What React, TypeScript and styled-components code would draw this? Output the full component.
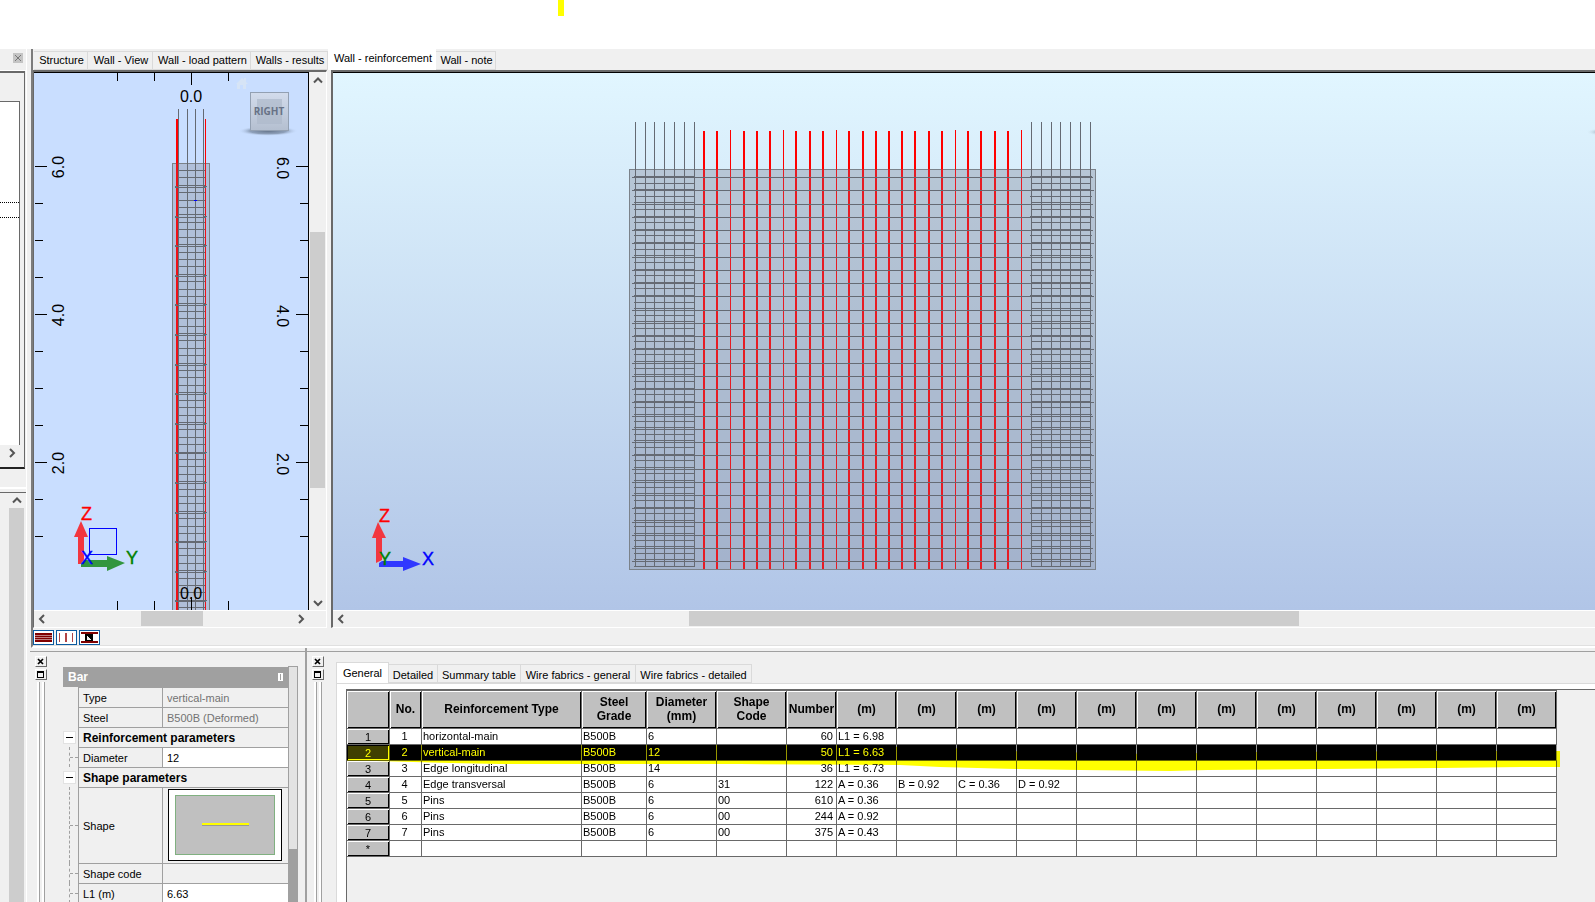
import React from "react";
import styled, { createGlobalStyle, css } from "styled-components";

const FACE = "#f0f0f0";
const SHADE = "#a0a0a0";
const DARK = "#696969";
const THUMB = "#cdcdcd";
const STEEL = "#656a73";

const Global = createGlobalStyle`
  * { box-sizing: border-box; }
  body { margin: 0; background: #fff; color: #000; font: 11px/14px "Liberation Sans", Arial, sans-serif; }
  button, input { font: inherit; color: inherit; margin: 0; padding: 0; border: 0; border-radius: 0; background: transparent; }
  svg { display: block; }
`;

/* ---------- shell ---------- */

const Page = styled.div`
  display: flex;
  flex-direction: column;
  height: 100vh;
  overflow: hidden;
`;

const TopBand = styled.header`
  flex: none;
  height: 49px;
  padding-left: 558px;
`;

const Marker = styled.div`
  width: 6px;
  height: 16px;
  background: #ff0;
`;

const Body = styled.div`
  display: flex;
  flex: 1;
  min-height: 0;
  background: ${FACE};
`;

const Main = styled.main`
  display: flex;
  flex-direction: column;
  flex: 1;
  min-width: 0;
  margin-left: 3px;
`;

/* ---------- left dock ---------- */

const Dock = styled.aside`
  display: flex;
  flex-direction: column;
  flex: none;
  width: 27px;
  border-right: 1px solid #fff;
`;

const DockHeader = styled.div`
  display: flex;
  justify-content: flex-end;
  align-items: flex-start;
  height: 22px;
  padding: 4px 3px 0 0;
  border-bottom: 1px solid #fff;
`;

const DockClose = styled.button`
  width: 10px;
  height: 10px;
  background: #c4c4c4;
`;

const DockFrame = styled.div`
  display: flex;
  flex-direction: column;
  width: 25px;
  height: 398px;
  padding: 28px 4px 6px 0;
  border: solid ${DARK};
  border-width: 2px 1px 2px 0;
  border-bottom-color: #222;
`;

const DockList = styled.div`
  flex: 1;
  padding-top: 100px;
  background: #fff;
  border: solid ${DARK};
  border-width: 1px 1px 0 0;
`;

const DockItem = styled.div`
  height: 16px;
  border: dotted #000;
  border-width: 1px 0;
`;

const DockScroll = styled.button`
  display: flex;
  align-items: center;
  justify-content: flex-end;
  height: 16px;
  padding-right: 3px;
`;

const DockLower = styled.div`
  display: flex;
  flex-direction: column;
  flex: 1;
  margin-top: 18px;
  padding-top: 3px;
  border-top: 2px solid #fff;
`;

const DockLowerBody = styled.div`
  display: flex;
  flex-direction: column;
  flex: 1;
  padding-left: 9px;
  border-top: 1px solid ${DARK};
`;

const DockArrow = styled.button`
  display: flex;
  align-items: center;
  justify-content: center;
  width: 15px;
  height: 15px;
`;

const DockThumb = styled.div`
  flex: 1;
  width: 15px;
  background: ${THUMB};
`;

/* ---------- tabs ---------- */

const TabStrip = styled.nav<{ $inset: number }>`
  display: flex;
  align-items: flex-end;
  padding-left: ${(p) => p.$inset}px;
`;

const Tab = styled.button<{ $w: number; $active?: boolean; $plain?: boolean }>`
  flex: none;
  width: ${(p) => p.$w}px;
  height: 19px;
  padding: ${(p) => (p.$plain ? "0 0 2px 2px" : "2px 0 0 0")};
  white-space: nowrap;
  border: solid #dadada;
  border-width: 1px 1px 1px 0;
  ${(p) =>
    p.$active &&
    css`
      height: 21px;
      padding-bottom: ${p.$plain ? "4px" : "1px"};
      padding-top: 0;
      background: #fff;
      border-width: ${p.$plain ? "0" : "1px 1px 0 1px"};
    `}
`;

/* ---------- views ---------- */

const Upper = styled.section`
  flex: none;
  margin-left: 1px;
  border-left: 2px solid #7c7c7c;
  border-bottom: 2px solid #fff;
`;

const Panes = styled.div`
  display: flex;
`;

const Pane = styled.div<{ $fill?: boolean }>`
  display: flex;
  flex-direction: column;
  min-width: 0;
  border-top: 2px solid ${DARK};
  border-left: ${(p) => (p.$fill ? 2 : 1)}px solid ${DARK};
  border-bottom: 1px solid #fff;
  ${(p) => (p.$fill ? "flex: 1;" : "flex: none; margin-right: 4px; border-right: 1px solid #fff;")}
`;

const PaneRow = styled.div`
  display: flex;
`;

const SideCanvas = styled.div`
  width: 275px;
  background: #c9deff;
  border-top: 1px solid #000;
  border-right: 1px solid #000;
`;

const FrontCanvas = styled.div`
  flex: 1;
  min-width: 0;
  overflow: hidden;
  background: linear-gradient(#e1f6ff, #b1c5e7);
  border-top: 1px solid #000;
`;

const VScroll = styled.div`
  display: flex;
  flex-direction: column;
  width: 17px;
  padding: 1px 1px 0;
`;

const HScroll = styled.div<{ $corner?: boolean }>`
  display: flex;
  height: 17px;
  padding: 0 ${(p) => (p.$corner ? 17 : 0)}px 0 1px;
  border-top: 1px solid #fff;
`;

const ScrollButton = styled.button`
  display: flex;
  align-items: center;
  justify-content: center;
  flex: none;
  width: 16px;
  height: 15px;
`;

const Track = styled.div<{ $vertical?: boolean; $before: number }>`
  flex: 1;
  min-width: 0;
  ${(p) => (p.$vertical ? `padding-top: ${p.$before}px;` : `padding-left: ${p.$before}px;`)}
`;

const Thumb = styled.div<{ $w: number; $h: number }>`
  width: ${(p) => p.$w}px;
  height: ${(p) => p.$h}px;
  background: ${THUMB};
`;

const ViewTools = styled.div`
  display: flex;
  gap: 2px;
  height: 18px;
  padding-top: 2px;
  border-bottom: 1px solid #e0e0e0;
`;

const ToolButton = styled.button`
  width: 21px;
  height: 15px;
  background: #fff;
  border: 1px solid #0b5a9f;
`;

/* ---------- lower panels ---------- */

const Lower = styled.section`
  display: flex;
  flex: 1;
  min-height: 0;
`;

const Properties = styled.section`
  display: flex;
  flex: none;
  width: 275px;
  margin-top: 3px;
  padding-left: 5px;
  border-top: 1px solid ${SHADE};
`;

const Divider = styled.div`
  flex: none;
  width: 2px;
  background: ${SHADE};
`;

const Reports = styled.section`
  display: flex;
  flex: 1;
  min-width: 0;
  margin-top: 3px;
  padding-left: 5px;
  border-top: 1px solid ${SHADE};
`;

const Grip = styled.div`
  display: flex;
  flex-direction: column;
  align-items: center;
  flex: none;
  gap: 2px;
  width: 12px;
  padding-top: 4px;
`;

const GripButton = styled.button`
  flex: none;
  width: 12px;
  height: 11px;
  border: 1px solid;
  border-color: #fff ${DARK} ${DARK} #fff;
`;

const GripBars = styled.div`
  display: flex;
  gap: 2px;
  flex: 1;
`;

const GripBar = styled.div`
  width: 3px;
  border-right: 1px solid ${SHADE};
  background: #fff;
`;

const PropertyList = styled.div`
  width: 225px;
  margin-left: 16px;
  padding-top: 15px;
`;

const PropertyTitle = styled.div`
  display: flex;
  align-items: center;
  justify-content: space-between;
  height: 20px;
  padding: 0 5px;
  background: ${SHADE};
  color: #fff;
  font-size: 12px;
  font-weight: bold;
`;

const TitleGlyph = styled.span`
  width: 5px;
  height: 8px;
  border: solid #fff;
  border-width: 1px 2px;
`;

const PropertyRow = styled.div<{ $tall?: boolean }>`
  display: flex;
  height: ${(p) => (p.$tall ? 76 : 20)}px;
`;

const TreeCell = styled.div`
  display: flex;
  align-items: center;
  flex: none;
  width: 15px;
`;

const Stem = styled.div`
  display: flex;
  align-items: center;
  width: 9px;
  height: 100%;
  margin-left: 6px;
  border-left: 1px dashed ${SHADE};
`;

const Twig = styled.div`
  width: 8px;
  border-top: 1px dashed ${SHADE};
`;

const Expander = styled.button`
  display: flex;
  align-items: center;
  justify-content: center;
  width: 13px;
  height: 13px;
  background: #fff;
  border: 1px solid #e2e2e2;
`;

const ExpanderBar = styled.span`
  width: 7px;
  height: 1px;
  background: #000;
`;

const PropertyLabel = styled.label`
  display: flex;
  align-items: center;
  width: 85px;
  padding-left: 4px;
  border: solid ${SHADE};
  border-width: 1px 1px 0 1px;
`;

const PropertyHeading = styled.div`
  flex: 1;
  padding: 3px 4px 0;
  border: solid ${SHADE};
  border-width: 1px 0 0 1px;
  font-size: 12px;
  font-weight: bold;
`;

const PropertyValue = styled.div`
  display: flex;
  align-items: flex-start;
  flex: 1;
  padding: 1px 0 0 5px;
  border-top: 1px solid ${SHADE};
`;

const PropertyInput = styled.input`
  flex: 1;
  min-width: 0;
  padding-left: 4px;
  background: #fff;
  border-top: 1px solid ${SHADE};
  &:disabled { background: ${FACE}; color: #737373; }
`;

const ShapePreview = styled.div`
  width: 114px;
  height: 72px;
  padding: 5px 6px;
  background: #fff;
  border: 1px solid #000;
`;

const PropertyScroll = styled.div`
  width: 10px;
  margin-top: 14px;
  padding-top: 182px;
  border: 1px solid ${SHADE};
  background: #e3e3e3;
`;

const PropertyThumb = styled.div`
  height: 100%;
  background: ${SHADE};
`;

const ReportBook = styled.div`
  display: flex;
  flex-direction: column;
  flex: 1;
  min-width: 0;
  margin-left: 12px;
  padding-top: 10px;
`;

const Sheet = styled.div`
  flex: 1;
  min-height: 0;
  padding: 5px 0 0 9px;
  background: #fff;
  border: solid #dadada;
  border-width: 1px 0 0 1px;
`;

const SheetFrame = styled.div`
  position: relative;
  isolation: isolate;
  height: 100%;
  background: ${FACE};
  border: solid ${DARK};
  border-width: 1px 0 0 1px;
`;

const Table = styled.table`
  width: 1210px;
  table-layout: fixed;
  border-collapse: separate;
  border-spacing: 0;
  background: #fff;
`;

const HeadCell = styled.th`
  height: 39px;
  padding: 0 0 2px;
  background: #c0c0c0;
  border: solid ${DARK};
  border-width: 1px 1px 1px 0;
  box-shadow: inset 1px 1px #fff, inset -1px -1px #000;
  font-size: 12px;
  white-space: pre-line;
`;

const RowHead = styled.th<{ $selected: boolean }>`
  height: 16px;
  padding: 0;
  font-weight: normal;
  background: ${(p) => (p.$selected ? "#3f3f3f" : "#c0c0c0")};
  color: ${(p) => (p.$selected ? "#fff" : "#000")};
  border: solid ${DARK};
  border-width: 0 1px 1px 0;
  box-shadow: ${(p) =>
    p.$selected ? "inset 1px 1px #000, inset -1px -1px #fff" : "inset 1px 1px #fff, inset -1px -1px #000"};
`;

const Cell = styled.td<{ $selected: boolean; $align?: string }>`
  height: 16px;
  padding: 0 3px 1px 1px;
  text-align: ${(p) => p.$align ?? "left"};
  white-space: nowrap;
  background: ${(p) => (p.$selected ? "#000" : "#fff")};
  color: ${(p) => (p.$selected ? "#fff" : "#000")};
  border: solid ${DARK};
  border-width: 0 1px 1px 0;
  ${(p) => p.$selected && "border-right-color: #969696;"}
`;

const Highlight = styled.svg`
  position: absolute;
  top: 54px;
  left: 0;
  mix-blend-mode: multiply;
  pointer-events: none;
`;

/* ---------- drawings ---------- */

const chevrons = {
  left: "M6 1 L2 5 L6 9",
  right: "M3 1 L7 5 L3 9",
  up: "M1 6.500 L5 2.500 L9 6.500",
  down: "M1 3 L5 7 L9 3",
};

function Chevron({ dir }: { dir: keyof typeof chevrons }) {
  return (
    <svg width="10" height="10" viewBox="0 0 10 10" aria-hidden="true">
      <path d={chevrons[dir]} fill="none" stroke="#555" strokeWidth="2" />
    </svg>
  );
}

const range = (n: number) => Array.from({ length: n }, (_, i) => i);

const TEXT = '"Liberation Sans", Arial, sans-serif';

function SideView() {
  const minor = [130, 167, 204, 278, 315, 352, 426, 463];
  const major: [number, string][] = [[93, "6.0"], [241, "4.0"], [389, "2.0"]];
  return (
    <svg width="274" height="537" viewBox="34 73 274 537" role="img" aria-label="Side view of the wall">
      <defs>
        <linearGradient id="cube" x1="0" y1="0" x2="0" y2="1">
          <stop offset="0" stopColor="#d3dcec" />
          <stop offset="1" stopColor="#b4bfd0" />
        </linearGradient>
        <radialGradient id="shade">
          <stop offset="0" stopColor="#65758b" />
          <stop offset="0.6" stopColor="#7f90a8" stopOpacity="0.8" />
          <stop offset="1" stopColor="#c9deff" stopOpacity="0" />
        </radialGradient>
      </defs>
      <g shapeRendering="crispEdges">
        <rect x="172.500" y="163.500" width="37" height="460" fill="#b0bfd9" stroke="#7b8188" />
        {[178, 187, 195, 203].map((x) => (
          <rect key={x} x={x} y="109" width="1" height="501" fill={STEEL} />
        ))}
        {range(60).map((i) => (
          <rect key={i} x="178" y={Math.round(170 + i * 7.41)} width="27" height="1" fill={STEEL} />
        ))}
        <rect x="176" y="119" width="2" height="44" fill="#f00" />
        <rect x="205" y="119" width="1" height="44" fill="#f00" />
        <rect x="176" y="163" width="2" height="447" fill="#ee1016" />
        <rect x="205" y="163" width="1" height="447" fill="#ee1016" />
        {range(15).map((i) => {
          const y = Math.round(187 + i * 29.6);
          return (
            <g key={i} fill={STEEL}>
              <rect x="176" y={y} width="30" height="1" />
              <rect x="175" y={y - 1} width="2" height="2" />
              <rect x="204" y={y - 1} width="3" height="1" />
            </g>
          );
        })}
        <rect x="194" y="200" width="3" height="1" fill="#00f" />
        {minor.map((y) => (
          <g key={y}>
            <rect x="35" y={y + 73} width="8" height="1" />
            <rect x="300" y={y + 73} width="8" height="1" />
          </g>
        ))}
        {major.map(([y]) => (
          <g key={y}>
            <rect x="35" y={y + 73} width="12" height="1" />
            <rect x="296" y={y + 73} width="12" height="1" />
          </g>
        ))}
        {[117, 154, 228].map((x) => (
          <g key={x}>
            <rect x={x} y="73" width="1" height="8" />
            <rect x={x} y="601" width="1" height="9" />
          </g>
        ))}
        <rect x="191" y="73" width="1" height="12" />
        <rect x="191" y="597" width="1" height="13" />
        <rect x="89.500" y="528.500" width="27" height="26" fill="none" stroke="#00f" />
      </g>
      <g fontFamily={TEXT} fontSize="16" textAnchor="middle">
        <text x="191" y="102">0.0</text>
        <text x="191" y="599">0.0</text>
        {major.map(([y, t]) => (
          <g key={t}>
            <text transform={`translate(64 ${y + 74}) rotate(-90)`}>{t}</text>
            <text transform={`translate(277 ${y + 75}) rotate(90)`}>{t}</text>
          </g>
        ))}
      </g>
      <path d="M78 564 V537 H74 L81 521 L88 537 H84 V560 L81 564 Z" fill="#f2363f" />
      <path d="M81 567 V563 L84 560 H107 V556 L125 563 L107 571 V567 Z" fill="#32963f" />
      <g fontFamily={TEXT} fontSize="18">
        <text x="81" y="520" fill="#f00" stroke="#f00" strokeWidth="0.400">Z</text>
        <text x="81" y="564" fill="#00f" stroke="#00f" strokeWidth="0.400">X</text>
        <text x="126" y="564" fill="#008000" stroke="#008000" strokeWidth="0.400">Y</text>
      </g>
      <path d="M236 84 L242 78 L244 80 V78 H246 V82 L248 84 H246 V89 H243 V85 H240 V89 H237 V84 Z" fill="#d6e4f6" />
      <ellipse cx="268" cy="131" rx="30" ry="5" fill="url(#shade)" />
      <rect x="250.500" y="92.500" width="38" height="38" fill="url(#cube)" stroke="#93a0b2" />
      <rect x="257" y="99" width="25" height="25" fill="#aeb9cb" opacity="0.7" />
      <text x="269" y="115" fill="#687286" fontFamily={'"Liberation Sans Narrow", "Open Sans", sans-serif'} fontSize="10" fontWeight="bold" textAnchor="middle">RIGHT</text>
    </svg>
  );
}

function FrontView() {
  const left = [635, 645, 654, 664, 674, 684, 694];
  const right = [1031, 1041, 1051, 1060, 1070, 1080, 1090];
  const thin = [2, 6, 10, 19, 24];
  return (
    <svg width="1262" height="537" viewBox="333 73 1262 537" role="img" aria-label="Front view of the wall reinforcement">
      <defs>
        <radialGradient id="farShade">
          <stop offset="0" stopColor="#5f6f80" />
          <stop offset="1" stopColor="#dceffb" stopOpacity="0" />
        </radialGradient>
      </defs>
      <g shapeRendering="crispEdges">
        <rect x="629.500" y="169.500" width="466" height="400" fill="#9099aa" fillOpacity="0.46" stroke="#7b828a" />
        {[...left, ...right].map((x) => (
          <rect key={x} x={x} y="122" width="1" height="445" fill={STEEL} />
        ))}
        {range(25).map((i) => {
          const w = thin.includes(i) ? 1 : 2;
          const x = Math.round(703 + i * 13.21) + (w === 1 ? 1 : 0);
          return (
            <g key={i}>
              <rect x={x} y={w === 1 ? 130 : 131} width={w} height="39" fill="#f00" />
              <rect x={x} y="169" width={w} height="400" fill="#e61c24" />
            </g>
          );
        })}
        {range(30).map((i) => (
          <rect key={i} x="632" y={Math.round(177 + i * 13.25)} width={i % 2 ? 462 : 461} height="1" fill={STEEL} />
        ))}
        {range(60).map((i) => {
          const y = Math.round(176 + i * 6.61);
          return (
            <g key={i} fill={STEEL}>
              <rect x="634" y={y} width="61" height="1" />
              <rect x={i % 3 ? 1031 : 1030} y={y} width={i % 3 ? 60 : 62} height="1" />
            </g>
          );
        })}
      </g>
      <path d="M376 563 V538 H372 L378 522 L386 538 H382 V560 Z" fill="#f2363f" />
      <path d="M379 567 V563 L382 561 H403 V557 L421 564 L403 571 V567 Z" fill="#3038ff" />
      <g fontFamily={TEXT} fontSize="18">
        <text x="379" y="522" fill="#f00" stroke="#f00" strokeWidth="0.400">Z</text>
        <text x="379" y="565" fill="#008000" stroke="#008000" strokeWidth="0.400">Y</text>
        <text x="422" y="565" fill="#00f" stroke="#00f" strokeWidth="0.400">X</text>
      </g>
      <ellipse cx="1604" cy="132" rx="18" ry="4" fill="url(#farShade)" />
    </svg>
  );
}

function ToolArt({ kind }: { kind: number }) {
  return (
    <svg width="19" height="13" viewBox="0 0 19 13" shapeRendering="crispEdges" aria-hidden="true">
      {kind === 0 && (
        <>
          <rect x="1" y="2" width="17" height="9" fill="#c08080" />
          <path d="M1 2h17v2H1z M1 5h17v1H1z M1 9h17v2H1z M1 7h17v1H1z" fill="#800000" />
        </>
      )}
      {kind === 1 && <path d="M2 2h1v9H2z M8 2h2v9H8z M15 2h1v9h-1z" fill="#b04444" />}
      {kind === 2 && (
        <>
          <path d="M1 1h17v2H1z M1 10h17v2H1z" fill="#800000" />
          <path d="M5 3h8v7H5z" fill="#000" />
          <path d="M7 5 L12 9 H7z" fill="#eee" />
        </>
      )}
    </svg>
  );
}

function PanelGrip() {
  return (
    <Grip>
      <GripButton aria-label="Close panel">
        <svg width="10" height="9" viewBox="0 0 10 9" aria-hidden="true">
          <path d="M2 2 L7 7 M7 2 L2 7" stroke="#000" strokeWidth="1.700" />
        </svg>
      </GripButton>
      <GripButton aria-label="Maximise panel">
        <svg width="10" height="9" viewBox="0 0 10 9" shapeRendering="crispEdges" aria-hidden="true">
          <path d="M1.500 1 V7.500 H7.500 V1" fill="none" stroke="#000" />
          <path d="M1 1 h7 v2 h-7 z" />
        </svg>
      </GripButton>
      <GripBars>
        <GripBar />
        <GripBar />
      </GripBars>
    </Grip>
  );
}

/* ---------- data ---------- */

const viewTabs = [
  { name: "Structure", w: 54 },
  { name: "Wall - View", w: 65 },
  { name: "Wall - load pattern", w: 98 },
  { name: "Walls - results", w: 77 },
  { name: "Wall - reinforcement", w: 108, active: true },
  { name: "Wall - note", w: 60 },
];

const reportTabs = [
  { name: "General", w: 53, active: true },
  { name: "Detailed", w: 49 },
  { name: "Summary table", w: 83 },
  { name: "Wire fabrics - general", w: 115 },
  { name: "Wire fabrics - detailed", w: 116 },
];

const columns = [
  { head: "", w: 43 },
  { head: "No.", w: 32 },
  { head: "Reinforcement Type", w: 160 },
  { head: "Steel\nGrade", w: 65 },
  { head: "Diameter\n(mm)", w: 70 },
  { head: "Shape\nCode", w: 70 },
  { head: "Number", w: 50 },
  ...range(12).map(() => ({ head: "(m)", w: 60 })),
];

const rows = [
  ["1", "1", "horizontal-main", "B500B", "6", "", "60", "L1 = 6.98"],
  ["2", "2", "vertical-main", "B500B", "12", "", "50", "L1 = 6.63"],
  ["3", "3", "Edge longitudinal", "B500B", "14", "", "36", "L1 = 6.73"],
  ["4", "4", "Edge transversal", "B500B", "6", "31", "122", "A = 0.36", "B = 0.92", "C = 0.36", "D = 0.92"],
  ["5", "5", "Pins", "B500B", "6", "00", "610", "A = 0.36"],
  ["6", "6", "Pins", "B500B", "6", "00", "244", "A = 0.92"],
  ["7", "7", "Pins", "B500B", "6", "00", "375", "A = 0.43"],
  ["*"],
];

const alignOf = (c: number) => (c === 1 ? "center" : c === 6 ? "right" : "left");

function Field({ id, label, value, disabled, tree }: { id: string; label: string; value: string; disabled?: boolean; tree?: boolean }) {
  return (
    <PropertyRow>
      <TreeCell>{tree && <Stem><Twig /></Stem>}</TreeCell>
      <PropertyLabel htmlFor={id}>{label}</PropertyLabel>
      <PropertyInput id={id} defaultValue={value} disabled={disabled} />
    </PropertyRow>
  );
}

function Section({ title }: { title: string }) {
  return (
    <PropertyRow>
      <TreeCell>
        <Expander aria-label={`Collapse ${title}`}><ExpanderBar /></Expander>
      </TreeCell>
      <PropertyHeading>{title}</PropertyHeading>
    </PropertyRow>
  );
}

export default function App() {
  return (
    <Page>
      <Global />
      <TopBand><Marker /></TopBand>
      <Body>
        <Dock>
          <DockHeader>
            <DockClose aria-label="Close">
              <svg width="10" height="10" viewBox="0 0 10 10" aria-hidden="true">
                <path d="M2 2 L8 8 M8 2 L2 8" stroke="#777" />
              </svg>
            </DockClose>
          </DockHeader>
          <DockFrame>
            <DockList><DockItem /></DockList>
            <DockScroll aria-label="Scroll right"><Chevron dir="right" /></DockScroll>
          </DockFrame>
          <DockLower>
            <DockLowerBody>
              <DockArrow aria-label="Scroll up"><Chevron dir="up" /></DockArrow>
              <DockThumb />
            </DockLowerBody>
          </DockLower>
        </Dock>
        <Main>
          <Upper>
            <TabStrip $inset={1}>
              {viewTabs.map((t) => (
                <Tab key={t.name} $w={t.w} $active={t.active} $plain>{t.name}</Tab>
              ))}
            </TabStrip>
            <Panes>
              <Pane>
                <PaneRow>
                  <SideCanvas><SideView /></SideCanvas>
                  <VScroll>
                    <ScrollButton aria-label="Scroll up"><Chevron dir="up" /></ScrollButton>
                    <Track $vertical $before={144}><Thumb $w={15} $h={256} /></Track>
                    <ScrollButton aria-label="Scroll down"><Chevron dir="down" /></ScrollButton>
                  </VScroll>
                </PaneRow>
                <HScroll $corner>
                  <ScrollButton aria-label="Scroll left"><Chevron dir="left" /></ScrollButton>
                  <Track $before={90}><Thumb $w={62} $h={15} /></Track>
                  <ScrollButton aria-label="Scroll right"><Chevron dir="right" /></ScrollButton>
                </HScroll>
              </Pane>
              <Pane $fill>
                <FrontCanvas><FrontView /></FrontCanvas>
                <HScroll>
                  <ScrollButton aria-label="Scroll left"><Chevron dir="left" /></ScrollButton>
                  <Track $before={339}><Thumb $w={610} $h={15} /></Track>
                </HScroll>
              </Pane>
            </Panes>
            <ViewTools>
              {["Horizontal bars", "Vertical bars", "Section"].map((n, i) => (
                <ToolButton key={n} aria-label={n}><ToolArt kind={i} /></ToolButton>
              ))}
            </ViewTools>
          </Upper>
          <Lower>
            <Properties>
              <PanelGrip />
              <PropertyList>
                <PropertyTitle>Bar<TitleGlyph /></PropertyTitle>
                <Field id="type" label="Type" value="vertical-main" disabled />
                <Field id="steel" label="Steel" value="B500B (Deformed)" disabled />
                <Section title="Reinforcement parameters" />
                <Field id="diameter" label="Diameter" value="12" tree />
                <Section title="Shape parameters" />
                <PropertyRow $tall>
                  <TreeCell><Stem><Twig /></Stem></TreeCell>
                  <PropertyLabel as="span">Shape</PropertyLabel>
                  <PropertyValue>
                    <ShapePreview>
                      <svg width="100" height="60" viewBox="0 0 100 60" shapeRendering="crispEdges" role="img" aria-label="Straight bar">
                        <rect x="0.500" y="0.500" width="99" height="59" fill="#c0c0c0" stroke="#80b080" />
                        <rect x="27" y="28" width="47" height="2" fill="#ff0" />
                        <rect x="27" y="30" width="47" height="1" fill="#999" />
                      </svg>
                    </ShapePreview>
                  </PropertyValue>
                </PropertyRow>
                <Field id="code" label="Shape code" value="" disabled tree />
                <Field id="l1" label="L1 (m)" value="6.63" tree />
              </PropertyList>
              <PropertyScroll><PropertyThumb /></PropertyScroll>
            </Properties>
            <Divider />
            <Reports>
              <PanelGrip />
              <ReportBook>
                <TabStrip $inset={0}>
                  {reportTabs.map((t) => (
                    <Tab key={t.name} $w={t.w} $active={t.active}>{t.name}</Tab>
                  ))}
                </TabStrip>
                <Sheet>
                  <SheetFrame>
                    <Table>
                      <colgroup>
                        {columns.map((c, i) => (
                          <col key={i} style={{ width: c.w }} />
                        ))}
                      </colgroup>
                      <thead>
                        <tr>{columns.map((c, i) => <HeadCell key={i} scope="col">{c.head}</HeadCell>)}</tr>
                      </thead>
                      <tbody>
                        {rows.map((r, n) => (
                          <tr key={r[0]}>
                            <RowHead scope="row" $selected={n === 1}>{r[0]}</RowHead>
                            {range(18).map((c) => (
                              <Cell key={c} $selected={n === 1} $align={alignOf(c + 1)}>{r[c + 1] ?? ""}</Cell>
                            ))}
                          </tr>
                        ))}
                      </tbody>
                    </Table>
                    <Highlight width="1213" height="30" viewBox="347 744 1213 30" aria-hidden="true">
                      <path
                        d="M347 745 H836 L900 747 L950 748 L1000 751 L1150 754 L1250 752 L1440 751 H1560 V767 H1522 L1440 768 L1325 769 L1208 770 L1170 771 L1080 770 L1015 769 L940 767 L900 765 L740 764 H500 L450 763 L376 761 H347 Z"
                        fill="#ff0"
                      />
                    </Highlight>
                  </SheetFrame>
                </Sheet>
              </ReportBook>
            </Reports>
          </Lower>
        </Main>
      </Body>
    </Page>
  );
}
